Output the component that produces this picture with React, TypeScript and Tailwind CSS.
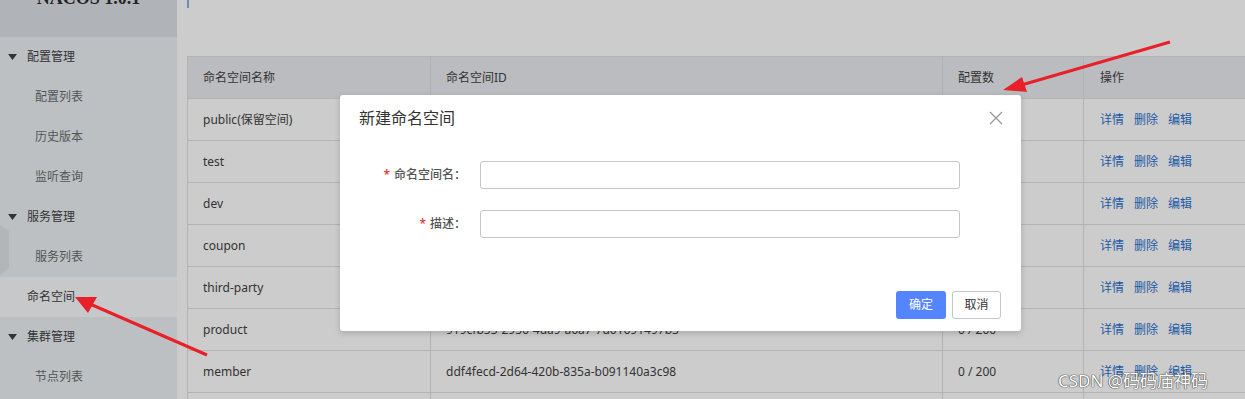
import React from 'react';

const menu = [
  { type: 'group', label: '配置管理' },
  { type: 'item', label: '配置列表' },
  { type: 'item', label: '历史版本' },
  { type: 'item', label: '监听查询' },
  { type: 'group', label: '服务管理' },
  { type: 'item', label: '服务列表' },
  { type: 'active', label: '命名空间' },
  { type: 'group', label: '集群管理' },
  { type: 'item', label: '节点列表' },
];

const rows = [
  { name: 'public(保留空间)', id: '', count: '' },
  { name: 'test', id: '', count: '' },
  { name: 'dev', id: '', count: '' },
  { name: 'coupon', id: '', count: '' },
  { name: 'third-party', id: '', count: '' },
  { name: 'product', id: '919cfb53-2956-4da9-a6a7-7d01691497b3', count: '0 / 200' },
  { name: 'member', id: 'ddf4fecd-2d64-420b-835a-b091140a3c98', count: '0 / 200' },
  { name: '', id: '', count: '' },
];

const App: React.FC = () => {
  return (
    <div className="relative flex h-[399px] w-[1245px] overflow-hidden bg-[#cccccc] font-['Noto_Sans','Noto_Sans_CJK_SC',sans-serif] text-[12px] text-[#333]">
      {/* 侧边栏 */}
      <aside className="w-[177px] shrink-0 bg-[#bcc0c3]">
        <div className="flex h-[37px] items-start justify-center overflow-hidden bg-[#b0b3b7]">
          <div className="-mt-[12px] font-['Liberation_Serif',serif] text-[18px] font-bold leading-[20px] text-[#222]">
            NACOS 1.0.1
          </div>
        </div>
        {menu.map((m, i) => {
          if (m.type === 'group') {
            return (
              <div key={i} className="flex h-[40px] items-center pl-[8px] text-[#333]">
                <svg width="9" height="6" viewBox="0 0 9 6" className="mr-[10px]">
                  <polygon points="0,0 9,0 4.5,6" fill="#333" />
                </svg>
                {m.label}
              </div>
            );
          }
          if (m.type === 'active') {
            return (
              <div key={i} className="flex h-[40px] items-center bg-[#c7c8ca] pl-[27px] text-[#333]">
                {m.label}
              </div>
            );
          }
          return (
            <div key={i} className="flex h-[40px] items-center pl-[35px] text-[#555]">
              {m.label}
            </div>
          );
        })}
      </aside>

      {/* 主区域 */}
      <main className="flex-1 pl-[10px]">
        <div className="h-[8px] w-[2px] bg-[#6b8db8]" />
        <div className="mt-[48px] w-[1100px] border-l border-t border-[#b3b3b3]">
          <div className="grid h-[42px] grid-cols-[243px_512px_141px_1fr] bg-[#bbbcc0]">
            <div className="flex items-center border-b border-r border-[#b3b3b3] pl-[15px]">命名空间名称</div>
            <div className="flex items-center border-b border-r border-[#b3b3b3] pl-[15px]">命名空间ID</div>
            <div className="flex items-center border-b border-r border-[#b3b3b3] pl-[15px]">配置数</div>
            <div className="flex items-center border-b border-[#b3b3b3] pl-[16px]">操作</div>
          </div>
          {rows.map((r, i) => (
            <div key={i} className="grid h-[42px] grid-cols-[243px_512px_141px_1fr]">
              <div className="flex items-center border-b border-r border-[#b3b3b3] pl-[15px]">{r.name}</div>
              <div className="flex items-center border-b border-r border-[#b3b3b3] pl-[15px]">{r.id}</div>
              <div className="flex items-center border-b border-r border-[#b3b3b3] pl-[15px]">{r.count}</div>
              <div className="flex items-center gap-[10px] border-b border-[#b3b3b3] pl-[16px] text-[#1d5aa6]">
                {r.name && (
                  <>
                    <span>详情</span>
                    <span>删除</span>
                    <span>编辑</span>
                  </>
                )}
              </div>
            </div>
          ))}
        </div>
      </main>

      {/* 弹窗 */}
      <div className="absolute left-[340px] top-[95px] flex h-[236px] w-[681px] flex-col rounded-[3px] bg-white shadow-[0_2px_6px_rgba(0,0,0,0.18)]">
        <div className="flex items-center justify-between pl-[19px] pr-[18px] pt-[12px]">
          <span className="text-[16px] leading-[22px] text-[#333]">新建命名空间</span>
          <svg width="14" height="14" viewBox="0 0 14 14">
            <path d="M1 1L13 13M13 1L1 13" stroke="#999" strokeWidth="1.3" />
          </svg>
        </div>
        <div className="mt-[32px] flex flex-col gap-[21px]">
          <div className="flex items-center">
            <label className="w-[140px] pr-[14px] text-right font-medium text-[#555]">
              <span className="mr-[4px] text-[#e72b2b]">*</span>命名空间名：
            </label>
            <div className="h-[28px] w-[480px] rounded-[3px] border border-[#c4c6cf] bg-white" />
          </div>
          <div className="flex items-center">
            <label className="w-[140px] pr-[14px] text-right font-medium text-[#555]">
              <span className="mr-[4px] text-[#e72b2b]">*</span>描述：
            </label>
            <div className="h-[28px] w-[480px] rounded-[3px] border border-[#c4c6cf] bg-white" />
          </div>
        </div>
        <div className="mt-auto flex justify-end gap-[6px] pb-[12px] pr-[20px]">
          <button className="h-[28px] w-[50px] rounded-[3px] bg-[#5584ff] text-[12px] text-white">确定</button>
          <button className="h-[28px] w-[49px] rounded-[3px] border border-[#c4c6cf] bg-white text-[12px] text-[#333]">取消</button>
        </div>
      </div>

      {/* 标注箭头 */}
      <svg className="pointer-events-none absolute left-0 top-0" width="1245" height="399">
        <polygon points="0,225 9,231 9,268 0,275" fill="#b3b6b9" />
        <line x1="1170" y1="42" x2="1018" y2="86" stroke="#e8202a" strokeWidth="3" />
        <polygon points="1003,90 1022,77 1027,92" fill="#e8202a" />
        <line x1="207" y1="355" x2="90" y2="304" stroke="#e8202a" strokeWidth="3" />
        <polygon points="75,297 97,297 88,313" fill="#e8202a" />
      </svg>

      {/* 水印 */}
      <div className="absolute left-[1058px] top-[368px] text-[17px] text-white [text-shadow:0_0_1px_#444,0_0_1px_#444,0_0_1px_#444]">
        CSDN @码码庙神码
      </div>
    </div>
  );
};

export default App;
